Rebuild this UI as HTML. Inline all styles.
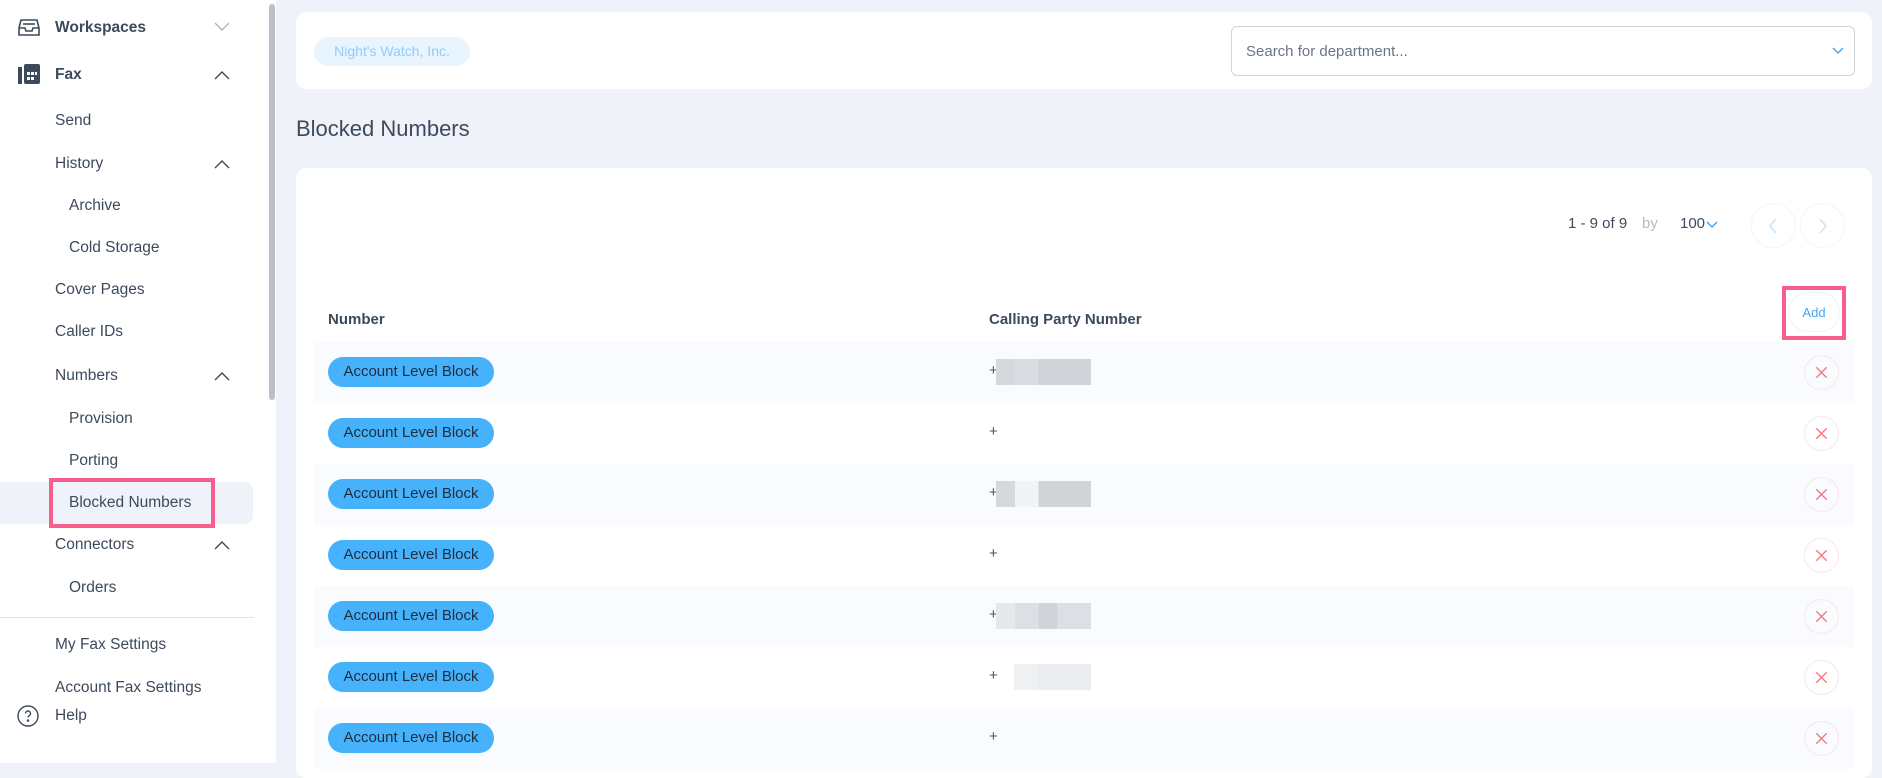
<!DOCTYPE html>
<html><head><meta charset="utf-8"><style>
*{box-sizing:border-box;margin:0;padding:0}
body{width:1882px;height:763px;overflow:hidden;background:#eff2f8;font-family:"Liberation Sans",sans-serif;color:#3d4a5c;position:relative}
.sb{position:absolute;left:0;top:0;width:276px;height:763px;background:#fff}
.sbar{position:absolute;left:269px;top:4px;width:6px;height:396px;background:#b9c0cc;border-radius:3px}
.it{position:absolute;font-size:15.5px;color:#3d4a5c;line-height:20px}
.chev{position:absolute;left:214px}
.active{position:absolute;left:0;top:482px;width:253px;height:42px;background:#eff2f8;border-radius:0 8px 8px 0}
.pink{position:absolute;border:4px solid #f75e8c}
.card{position:absolute;background:#fff;border-radius:10px}
.row{position:absolute;left:314px;width:1540px;height:61px}
.pill{position:absolute;left:14px;top:15px;width:166px;height:30px;border-radius:15px;background:#46b2fb;color:#1f2d3d;font-size:15px;line-height:30px;text-align:center}
.plus{position:absolute;left:675px;top:20px;font-size:15px;color:#555}
.blur{position:absolute;top:17px;height:26px}
.x{position:absolute;left:1490px;top:13px;width:35px;height:35px;border-radius:50%;border:1px solid #f8e7ea}
</style></head><body>
<div class="sb">
<div class="sbar"></div>
<div class="active"></div>
<svg style="position:absolute;left:18px;top:18px" width="22" height="20" viewBox="0 0 22 20" fill="none" stroke="#3d4a5c" stroke-width="1.6"><path d="M3 2h16l2 8v7H1v-7z"/><path d="M1 10h6l1 3h6l1-3h6"/><path d="M5 6h12"/></svg>
<svg style="position:absolute;left:18px;top:64px" width="22" height="20" viewBox="0 0 22 20"><rect x="0" y="3" width="4" height="17" fill="#3d4a5c"/><rect x="6" y="0" width="16" height="20" rx="2" fill="#3d4a5c"/><g fill="#fff"><rect x="9" y="8" width="3" height="3"/><rect x="13" y="8" width="3" height="3"/><rect x="17" y="8" width="2" height="3"/><rect x="9" y="13" width="3" height="3"/><rect x="13" y="13" width="3" height="3"/></g></svg>
<div class="it" style="left:55px;top:18px;font-weight:bold">Workspaces</div>
<div class="it" style="left:55px;top:65px;font-weight:bold">Fax</div>
<div class="it" style="left:55px;top:111px">Send</div>
<div class="it" style="left:55px;top:154px">History</div>
<div class="it" style="left:69px;top:196px">Archive</div>
<div class="it" style="left:69px;top:238px">Cold Storage</div>
<div class="it" style="left:55px;top:280px">Cover Pages</div>
<div class="it" style="left:55px;top:322px">Caller IDs</div>
<div class="it" style="left:55px;top:366px">Numbers</div>
<div class="it" style="left:69px;top:409px">Provision</div>
<div class="it" style="left:69px;top:451px">Porting</div>
<div class="it" style="left:69px;top:493px">Blocked Numbers</div>
<div class="it" style="left:55px;top:535px">Connectors</div>
<div class="it" style="left:69px;top:578px">Orders</div>
<div style="position:absolute;left:0;top:617px;width:254px;height:1px;background:#dde1e7"></div>
<div class="it" style="left:55px;top:635px">My Fax Settings</div>
<div class="it" style="left:55px;top:678px">Account Fax Settings</div>
<div class="it" style="left:55px;top:706px">Help</div>
<svg style="position:absolute;left:17px;top:705px" width="22" height="22" viewBox="0 0 22 22" fill="none" stroke="#3d4a5c" stroke-width="1.4"><circle cx="11" cy="11" r="10"/><path d="M8.5 8.5a2.5 2.5 0 1 1 3.5 2.3c-.7.4-1 .9-1 1.7"/><circle cx="11" cy="15.5" r=".6" fill="#3d4a5c"/></svg>
<svg class="chev" style="top:22px" width="16" height="10" viewBox="0 0 16 10" fill="none" stroke="#b0b7c3" stroke-width="1.4"><path d="M1 1l7 7 7-7"/></svg>
<svg class="chev" style="top:70px" width="16" height="10" viewBox="0 0 16 10" fill="none" stroke="#3d4a5c" stroke-width="1.4"><path d="M1 9l7-7 7 7"/></svg>
<svg class="chev" style="top:159px" width="16" height="10" viewBox="0 0 16 10" fill="none" stroke="#3d4a5c" stroke-width="1.4"><path d="M1 9l7-7 7 7"/></svg>
<svg class="chev" style="top:371px" width="16" height="10" viewBox="0 0 16 10" fill="none" stroke="#3d4a5c" stroke-width="1.4"><path d="M1 9l7-7 7 7"/></svg>
<svg class="chev" style="top:540px" width="16" height="10" viewBox="0 0 16 10" fill="none" stroke="#3d4a5c" stroke-width="1.4"><path d="M1 9l7-7 7 7"/></svg>
<div class="pink" style="left:49px;top:478px;width:166px;height:50px"></div>
</div>

<div class="card" style="left:296px;top:12px;width:1576px;height:77px"></div>
<div style="position:absolute;left:314px;top:37px;width:156px;height:29px;border-radius:15px;background:#e8f4fe;color:#8fcdfa;font-size:14px;line-height:29px;text-align:center">Night's Watch, Inc.</div>
<div style="position:absolute;left:1231px;top:26px;width:624px;height:50px;border:1px solid #cfd4db;border-radius:6px;background:#fff"><span style="position:absolute;left:14px;top:16px;font-size:15px;color:#6b7584">Search for department...</span>
<svg style="position:absolute;right:10px;top:20px" width="12" height="8" viewBox="0 0 12 8" fill="none" stroke="#46a6f0" stroke-width="1.5"><path d="M1 1l5 5 5-5"/></svg></div>
<div style="position:absolute;left:296px;top:116px;font-size:22px;color:#3d4a5c">Blocked Numbers</div>

<div class="card" style="left:296px;top:168px;width:1576px;height:610px"></div>
<div style="position:absolute;left:1568px;top:215px;font-size:15px;color:#3d4a5c">1 - 9 of 9</div>
<div style="position:absolute;left:1642px;top:215px;font-size:15px;color:#b5bcc7">by</div>
<div style="position:absolute;left:1680px;top:215px;font-size:15px;color:#3d4a5c">100</div>
<svg style="position:absolute;left:1706px;top:221px" width="12" height="8" viewBox="0 0 12 8" fill="none" stroke="#46a6f0" stroke-width="1.5"><path d="M1 1l5 5 5-5"/></svg>
<div style="position:absolute;left:1751px;top:203px;width:45px;height:45px;border-radius:50%;border:1px solid #f3f5f8"></div>
<div style="position:absolute;left:1800px;top:203px;width:45px;height:45px;border-radius:50%;border:1px solid #f3f5f8"></div>
<svg style="position:absolute;left:1768px;top:218px" width="10" height="16" viewBox="0 0 10 16" fill="none" stroke="#c5e3fb" stroke-width="1.5"><path d="M8 1L2 8l6 7"/></svg>
<svg style="position:absolute;left:1818px;top:218px" width="10" height="16" viewBox="0 0 10 16" fill="none" stroke="#c5e3fb" stroke-width="1.5"><path d="M2 1l6 7-6 7"/></svg>
<div class="pink" style="left:1782px;top:286px;width:64px;height:54px"></div>
<div style="position:absolute;left:1788px;top:292px;width:52px;height:40px;border-radius:20px;border:1px solid #eaf3fc;color:#46a6f0;font-size:13px;line-height:40px;text-align:center">Add</div>
<div style="position:absolute;left:328px;top:311px;font-size:15px;font-weight:bold;color:#3d4a5c">Number</div>
<div style="position:absolute;left:989px;top:311px;font-size:15px;font-weight:bold;color:#3d4a5c">Calling Party Number</div>

<div class="row" style="top:342px;background:#f9fbfe"><div class="pill">Account Level Block</div><div class="plus">+</div><div class="blur" style="left:682px;width:95px;background:linear-gradient(90deg,#d5d8dc 20%,#d9dce0 20% 45%,#d0d3d8 45%)"></div><svg class="x" viewBox="0 0 35 35"><path d="M12 12l11 11M23 12L12 23" stroke="#f36f7a" stroke-width="1.4"/></svg></div>
<div class="row" style="top:403px"><div class="pill">Account Level Block</div><div class="plus">+</div><svg class="x" viewBox="0 0 35 35"><path d="M12 12l11 11M23 12L12 23" stroke="#f36f7a" stroke-width="1.4"/></svg></div>
<div class="row" style="top:464px;background:#f9fbfe"><div class="pill">Account Level Block</div><div class="plus">+</div><div class="blur" style="left:682px;width:95px;background:linear-gradient(90deg,#d5d8dc 20%,#f2f3f5 20% 45%,#d0d3d8 45%)"></div><svg class="x" viewBox="0 0 35 35"><path d="M12 12l11 11M23 12L12 23" stroke="#f36f7a" stroke-width="1.4"/></svg></div>
<div class="row" style="top:525px"><div class="pill">Account Level Block</div><div class="plus">+</div><svg class="x" viewBox="0 0 35 35"><path d="M12 12l11 11M23 12L12 23" stroke="#f36f7a" stroke-width="1.4"/></svg></div>
<div class="row" style="top:586px;background:#f9fbfe"><div class="pill">Account Level Block</div><div class="plus">+</div><div class="blur" style="left:682px;width:95px;background:linear-gradient(90deg,#e6e8eb 20%,#dcdfe3 20% 45%,#d0d3d8 45% 65%,#dcdfe3 65%)"></div><svg class="x" viewBox="0 0 35 35"><path d="M12 12l11 11M23 12L12 23" stroke="#f36f7a" stroke-width="1.4"/></svg></div>
<div class="row" style="top:647px"><div class="pill">Account Level Block</div><div class="plus">+</div><div class="blur" style="left:700px;width:77px;background:linear-gradient(90deg,#f0f1f3 30%,#ecedf0 30%)"></div><svg class="x" viewBox="0 0 35 35"><path d="M12 12l11 11M23 12L12 23" stroke="#f36f7a" stroke-width="1.4"/></svg></div>
<div class="row" style="top:708px;background:#f9fbfe"><div class="pill">Account Level Block</div><div class="plus">+</div><svg class="x" viewBox="0 0 35 35"><path d="M12 12l11 11M23 12L12 23" stroke="#f36f7a" stroke-width="1.4"/></svg></div>
</body></html>
